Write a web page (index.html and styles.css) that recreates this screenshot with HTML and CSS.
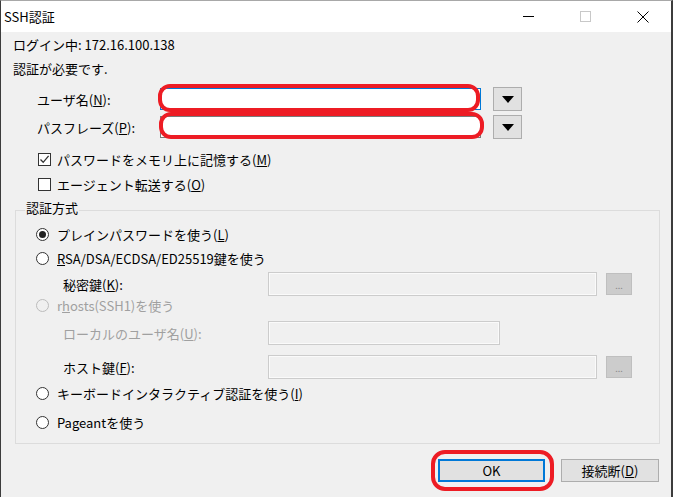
FILE: index.html
```html
<!DOCTYPE html>
<html>

<head>
  <title>SSH認証</title>
  <link rel="stylesheet" href="styles.css">
</head>

<body>
  <div class="window">
    <div class="titlebar">
      <span class="title">SSH認証</span>
      <div class="controls">
        <span class="ctl">
          <svg width="11" height="11" viewBox="0 0 11 11"><line x1="0" y1="5.5" x2="11" y2="5.5" stroke="#000" stroke-width="1"/></svg>
        </span>
        <span class="ctl">
          <svg width="11" height="11" viewBox="0 0 11 11"><rect x="0.5" y="0.5" width="10" height="10" fill="none" stroke="#c8c8c8" stroke-width="1"/></svg>
        </span>
        <span class="ctl">
          <svg width="12" height="12" viewBox="0 0 12 12"><path d="M0.5 0.5 L11.5 11.5 M11.5 0.5 L0.5 11.5" stroke="#000" stroke-width="1"/></svg>
        </span>
      </div>
    </div>

    <div class="content">
      <div class="info">ログイン中: 172.16.100.138</div>
      <div class="info info-2">認証が必要です.</div>

      <div class="field-row">
        <label class="field-label">ユーザ名(<u>N</u>):</label>
        <div class="combo focused"><span class="mark mark-user"></span></div>
        <button class="drop"><svg width="12" height="7" viewBox="0 0 12 7"><polygon points="0,0 12,0 6,7" fill="#000"/></svg></button>
      </div>
      <div class="field-row second">
        <label class="field-label">パスフレーズ(<u>P</u>):</label>
        <div class="combo"><span class="mark mark-pass"></span></div>
        <button class="drop"><svg width="12" height="7" viewBox="0 0 12 7"><polygon points="0,0 12,0 6,7" fill="#000"/></svg></button>
      </div>

      <div class="check-row">
        <span class="checkbox"><svg width="11" height="11" viewBox="0 0 11 11"><path d="M1.5 5.5 L4.2 8.3 L9.6 1.8" fill="none" stroke="#333" stroke-width="1.3"/></svg></span>
        <span>パスワードをメモリ上に記憶する(<u>M</u>)</span>
      </div>
      <div class="check-row check-2">
        <span class="checkbox"></span>
        <span>エージェント転送する(<u>O</u>)</span>
      </div>

      <div class="group">
        <span class="group-title">認証方式</span>

        <div class="radio-row">
          <span class="radio checked"></span>
          <span>プレインパスワードを使う(<u>L</u>)</span>
        </div>
        <div class="radio-row gap-8">
          <span class="radio"></span>
          <span><u>R</u>SA/DSA/ECDSA/ED25519鍵を使う</span>
        </div>
        <div class="sub-row gap-6">
          <span class="sub-label">秘密鍵(<u>K</u>):</span>
          <div class="path"></div>
          <span class="browse">...</span>
        </div>
        <div class="radio-row disabled gap-1">
          <span class="radio"></span>
          <span>r<u>h</u>osts(SSH1)を使う</span>
        </div>
        <div class="sub-row disabled gap-8">
          <span class="sub-label">ローカルのユーザ名(<u>U</u>):</span>
          <div class="path short"></div>
        </div>
        <div class="sub-row gap-10">
          <span class="sub-label">ホスト鍵(<u>F</u>):</span>
          <div class="path"></div>
          <span class="browse">...</span>
        </div>
        <div class="radio-row gap-6">
          <span class="radio"></span>
          <span>キーボードインタラクティブ認証を使う(<u>I</u>)</span>
        </div>
        <div class="radio-row gap-13">
          <span class="radio"></span>
          <span>Pageantを使う</span>
        </div>
      </div>

      <div class="buttons">
        <button class="btn btn-default">OK<span class="mark mark-ok"></span></button>
        <button class="btn">接続断(<u>D</u>)</button>
      </div>
    </div>
  </div>
</body>

</html>
```

FILE: styles.css
```css
/* Dialog "SSH認証" */
body {
  margin: 0;
  font-family: "Noto Sans CJK JP", "Noto Sans", sans-serif;
  font-size: 13px;
  color: #000;
}

.window {
  width: 673px;
  height: 497px;
  box-sizing: border-box;
  border-top: 1px solid #a8a8a8;
  border-left: 1px solid #3c3c3c;
  border-right: 2px solid #3c3c3c;
  background: #f0f0f0;
}

.titlebar {
  height: 31px;
  background: #fff;
  display: flex;
  align-items: center;
}

.title {
  flex: 1;
  padding-left: 3px;
}

.controls {
  display: flex;
  height: 100%;
}

.ctl {
  width: 57px;
  display: flex;
  align-items: center;
  justify-content: center;
}

.content {
  padding: 0 11px 0 12px;
}

.info {
  line-height: 16px;
  margin-top: 5px;
}

.info-2 {
  margin-top: 8px;
}

/* user / passphrase */
.field-row {
  display: flex;
  align-items: center;
  height: 24px;
  margin-top: 10px;
  padding-left: 24px;
}

.field-row.second {
  margin-top: 4px;
}

.field-label {
  width: 123px;
}

.combo {
  position: relative;
  width: 321px;
  height: 22px;
  box-sizing: border-box;
  border: 1px solid #7a7a7a;
  background: #fff;
}

.combo.focused {
  border-color: #0078d7;
}

.drop {
  margin-left: 12px;
  width: 29px;
  height: 24px;
  padding: 0;
  border: 1px solid #adadad;
  background: #e1e1e1;
  display: flex;
  align-items: center;
  justify-content: center;
}

/* red marker ovals */
.mark {
  position: absolute;
  border: 4px solid #ed1c24;
  border-radius: 12px;
}

.mark-user {
  left: -3px;
  right: 0;
  top: -5px;
  bottom: -3px;
}

.mark-pass {
  left: -2px;
  right: -4px;
  top: -5px;
  bottom: -2px;
}

.mark-ok {
  left: -9px;
  right: -11px;
  top: -11px;
  bottom: -11px;
  border-radius: 14px;
}

/* checkboxes */
.check-row {
  display: flex;
  align-items: center;
  height: 16px;
  margin-top: 12px;
  padding-left: 25px;
}

.check-row.check-2 {
  margin-top: 9px;
}

.checkbox {
  width: 13px;
  height: 13px;
  box-sizing: border-box;
  border: 1px solid #333;
  background: #fff;
  margin-right: 6px;
  display: flex;
  align-items: center;
  justify-content: center;
}

/* group box */
.group {
  position: relative;
  margin: 18px 0 0 2px;
  padding: 15px 0 13px 20px;
  border: 1px solid #dcdcdc;
}

.group-title {
  position: absolute;
  top: -11px;
  left: 9px;
  padding: 0 1px;
  line-height: 16px;
  background: #f0f0f0;
}

.radio-row {
  display: flex;
  align-items: center;
  height: 16px;
}

.radio {
  position: relative;
  width: 13px;
  height: 13px;
  box-sizing: border-box;
  border: 1px solid #333;
  border-radius: 50%;
  background: #fff;
  margin-right: 8px;
}

.radio.checked::after {
  content: "";
  position: absolute;
  left: 2px;
  top: 2px;
  width: 7px;
  height: 7px;
  border-radius: 50%;
  background: #222;
}

.disabled {
  color: #a0a0a0;
}

.disabled .radio {
  border-color: #bcbcbc;
  background: #f0f0f0;
}

.sub-row {
  display: flex;
  align-items: center;
  height: 24px;
  padding-left: 27px;
}

.sub-label {
  width: 205px;
}

.path {
  width: 329px;
  height: 24px;
  box-sizing: border-box;
  border: 1px solid #cccccc;
  box-shadow: inset 0 0 0 1px #fafafa;
  background: #f0f0f0;
}

.path.short {
  width: 232px;
}

.browse {
  margin-left: 9px;
  width: 26px;
  height: 22px;
  box-sizing: border-box;
  border: 1px solid #bfbfbf;
  background: #cccccc;
  color: #8a8a8a;
  font-size: 9px;
  line-height: 24px;
  text-align: center;
}

.gap-1 { margin-top: 1px; }
.gap-6 { margin-top: 6px; }
.gap-8 { margin-top: 8px; }
.gap-10 { margin-top: 10px; }
.gap-13 { margin-top: 13px; }

/* bottom buttons */
.buttons {
  display: flex;
  justify-content: flex-end;
  gap: 16px;
  margin-top: 15px;
  padding-right: 1px;
}

.btn {
  position: relative;
  width: 98px;
  height: 23px;
  padding: 0;
  border: 1px solid #adadad;
  background: #e1e1e1;
  font-family: inherit;
  font-size: 13px;
  color: #000;
}

.btn-default {
  width: 107px;
  border: 2px solid #0078d7;
}
```
